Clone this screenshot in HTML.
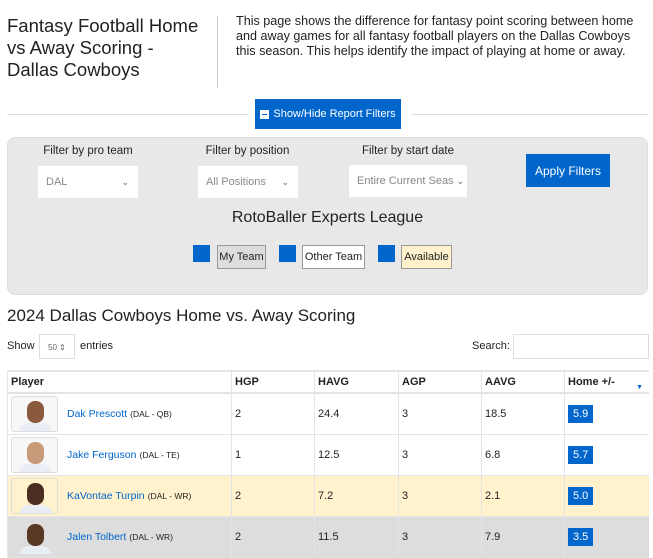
<!DOCTYPE html>
<html><head><meta charset="utf-8"><style>
*{box-sizing:border-box;margin:0;padding:0}
body{width:653px;height:557px;overflow:hidden;background:#fff;font-family:"Liberation Sans",Arial,sans-serif;color:#222;position:relative}
.a{position:absolute}
h1{position:absolute;left:7px;top:15px;font-size:18.5px;font-weight:normal;line-height:22px;color:#222}
.vl{left:217px;top:16px;width:1px;height:72px;background:#ccc}
.desc{left:236px;top:14px;width:410px;font-size:12.6px;line-height:15px;color:#222}
.hr{top:114px;height:1px;background:#ddd}
.btn{background:#0066cc;color:#fff;font-size:11px;display:flex;align-items:center;justify-content:center}
.panel{left:7px;top:137px;width:641px;height:158px;background:#e8e8e8;border:1px solid #ddd;border-radius:8px}
.lbl{font-size:11.5px;top:145px;color:#222;text-align:center}
.sel{background:#fff;font-size:11px;color:#888;padding-left:8px;display:flex;align-items:center}
.sel span.c{position:absolute;right:9px;font-size:9px;color:#666}
.sq{width:17px;height:17px;background:#0066cc;top:245px}
.lg{top:245px;height:24px;border:1px solid #999;font-size:11px;display:flex;align-items:center;justify-content:center;color:#222}
table{position:absolute;left:7px;top:370px;width:642px;border-collapse:collapse;font-size:11px}
th{text-align:left;font-weight:bold;height:22px;border-top:2px solid #e4e4e4;border-bottom:2px solid #e4e4e4;border-left:1px solid #e4e4e4;padding-left:3px;vertical-align:middle}
td{height:41px;border-bottom:1px solid #e4e4e4;border-left:1px solid #e4e4e4;padding-left:3px;vertical-align:middle}
tr.y td{background:#fff2cc}tr.g td{background:#ddd}
.img{display:inline-block;width:47px;height:36px;border:1px solid #ddd;border-radius:3px;vertical-align:middle;margin-right:9px;background:#f7f7f7;position:relative;overflow:hidden}
.img i{position:absolute;left:15px;top:4px;width:17px;height:22px;border-radius:8px;background:#8a5a3c}
.img b{position:absolute;left:7px;top:26px;width:33px;height:14px;border-radius:10px 10px 0 0;background:#e8eef4}
.n{color:#0066cc;font-size:10.5px}.t{font-size:8.5px}
.bd{display:inline-block;background:#0066cc;color:#fff;padding:3px 5px;font-size:11px}
</style></head><body>
<h1>Fantasy Football Home<br>vs Away Scoring -<br>Dallas Cowboys</h1>
<div class="a vl"></div>
<div class="a desc">This page shows the difference for fantasy point scoring between home and away games for all fantasy football players on the Dallas Cowboys this season. This helps identify the impact of playing at home or away.</div>
<div class="a hr" style="left:7px;width:242px"></div><div class="a hr" style="left:412px;width:236px"></div>
<div class="a btn" style="left:255px;top:99px;width:146px;height:30px"><span style="display:inline-block;width:9px;height:9px;background:#fff;margin-right:4px;position:relative"><span style="position:absolute;left:2px;top:4px;width:5px;height:1px;background:#0066cc"></span></span>Show/Hide Report Filters</div>
<div class="a panel"></div>
<div class="a lbl" style="left:38px;width:100px">Filter by pro team</div>
<div class="a lbl" style="left:190px;width:115px">Filter by position</div>
<div class="a lbl" style="left:348px;width:120px">Filter by start date</div>
<div class="a sel" style="left:38px;top:166px;width:100px;height:32px">DAL<span class="c">&#8964;</span></div>
<div class="a sel" style="left:198px;top:166px;width:100px;height:32px">All Positions<span class="c">&#8964;</span></div>
<div class="a sel" style="left:349px;top:165px;width:118px;height:32px;overflow:hidden;white-space:nowrap">Entire Current Seas<span class="c" style="right:3px;background:#fff">&#8964;</span></div>
<div class="a btn" style="left:526px;top:154px;width:84px;height:33px;font-size:12px">Apply Filters</div>
<div class="a" style="left:7px;width:641px;top:209px;text-align:center;font-size:16px;color:#222">RotoBaller Experts League</div>
<div class="a sq" style="left:193px"></div><div class="a lg" style="left:217px;width:49px;background:#ddd">My Team</div>
<div class="a sq" style="left:279px"></div><div class="a lg" style="left:302px;width:63px;background:#fff">Other Team</div>
<div class="a sq" style="left:378px"></div><div class="a lg" style="left:401px;width:51px;background:#fff2cc">Available</div>
<div class="a" style="left:7px;top:306px;font-size:17px;color:#222">2024 Dallas Cowboys Home vs. Away Scoring</div>
<div class="a" style="left:7px;top:340px;font-size:11px">Show</div>
<div class="a" style="left:39px;top:334px;width:36px;height:25px;border:1px solid #ddd;font-size:8px;color:#666;padding:8px 0 0 8px">50 &#8661;</div>
<div class="a" style="left:80px;top:340px;font-size:11px">entries</div>
<div class="a" style="left:472px;top:340px;font-size:11px">Search:</div>
<div class="a" style="left:513px;top:334px;width:136px;height:25px;border:1px solid #ddd"></div>
<table>
<tr><th style="width:224px">Player</th><th style="width:83px">HGP</th><th style="width:84px">HAVG</th><th style="width:83px">AGP</th><th style="width:83px">AAVG</th><th style="position:relative">Home +/-<span style="position:absolute;right:6px;bottom:1px;color:#0066cc;font-size:7px">&#9660;</span></th></tr>
<tr><td><span class="img"><i></i><b></b></span><span class="n">Dak Prescott</span> <span class="t">(DAL - QB)</span></td><td>2</td><td>24.4</td><td>3</td><td>18.5</td><td><span class="bd">5.9</span></td></tr>
<tr><td><span class="img"><i style="background:#c79a7a"></i><b></b></span><span class="n">Jake Ferguson</span> <span class="t">(DAL - TE)</span></td><td>1</td><td>12.5</td><td>3</td><td>6.8</td><td><span class="bd">5.7</span></td></tr>
<tr class="y"><td><span class="img" style="background:#fff2cc"><i style="background:#4a2e20"></i><b></b></span><span class="n">KaVontae Turpin</span> <span class="t">(DAL - WR)</span></td><td>2</td><td>7.2</td><td>3</td><td>2.1</td><td><span class="bd">5.0</span></td></tr>
<tr class="g"><td><span class="img" style="background:#ddd"><i style="background:#5a3826"></i><b></b></span><span class="n">Jalen Tolbert</span> <span class="t">(DAL - WR)</span></td><td>2</td><td>11.5</td><td>3</td><td>7.9</td><td><span class="bd">3.5</span></td></tr>
</table>
</body></html>
